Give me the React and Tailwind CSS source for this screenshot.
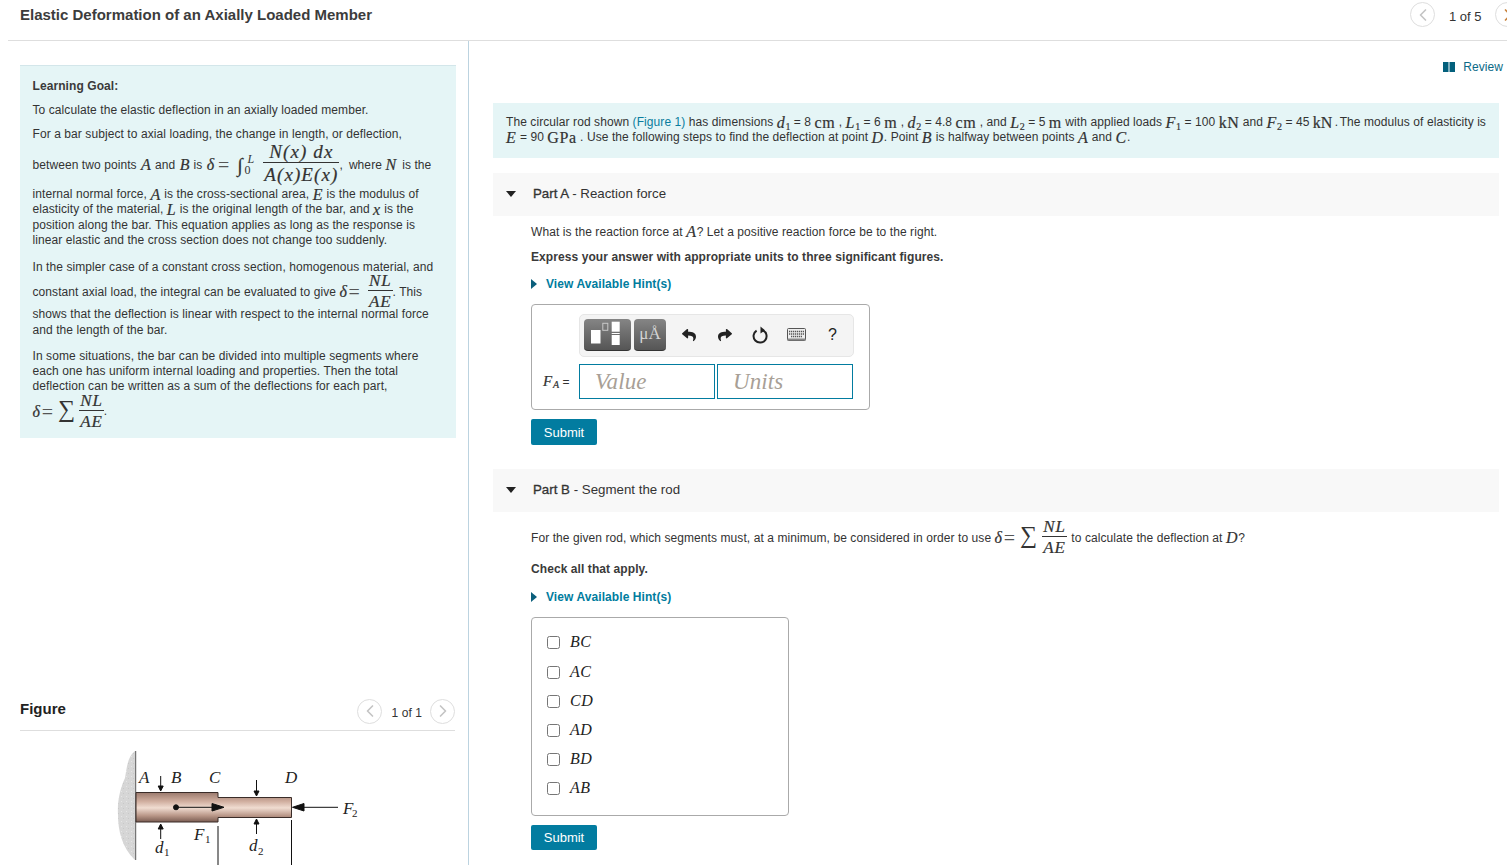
import React from "react";
import { FaReply, FaShare } from "react-icons/fa";
import { LuChevronLeft, LuChevronRight } from "react-icons/lu";

const M = ({ children, size = "text-[16px]", className = "" }) => (
  <span className={`italic ${size} leading-none tracking-[0.7px] [-webkit-text-stroke:0.2px] [font-family:'Liberation_Serif',serif] ${className}`}>{children}</span>
);
const R = ({ children, className = "" }) => (
  <span className={`text-[16px] leading-none [-webkit-text-stroke:0.2px] [font-family:'Liberation_Serif',serif] ${className || "tracking-[0.6px]"}`}>{children}</span>
);
const S = ({ children }) => <span className="text-[10px] not-italic leading-none relative top-[2px] tracking-normal">{children}</span>;

const Eq = ({ className = "" }) => (
  <span className={`text-[20px] leading-none text-[#555] [font-family:'Liberation_Serif',serif] ${className}`}>=</span>
);

const Sigma = ({ className = "" }) => (
  <span className={`text-[24px] leading-none relative -top-[3px] [font-family:'Liberation_Serif',serif] ${className}`}>∑</span>
);

const Frac = ({ top, bottom, size = "text-[17px]", className = "" }) => (
  <span className={`inline-flex flex-col items-center align-middle italic leading-none tracking-[0.9px] [-webkit-text-stroke:0.2px] [font-family:'Liberation_Serif',serif] ${size} ${className}`}>
    <span className="px-[1px] pb-[1px] whitespace-nowrap">{top}</span>
    <span className="self-stretch h-[1px] bg-[#333]" />
    <span className="px-[1px] pt-[2px] whitespace-nowrap">{bottom}</span>
  </span>
);

const Circle = ({ dir, color = "text-[#c4c4c4]", className = "" }) => (
  <span className={`flex-none w-[25px] h-[25px] rounded-full border border-[#dedede] flex items-center justify-center bg-white ${className}`}>
    {dir === "l" ? <LuChevronLeft className={`w-[20px] h-[20px] ${color}`} /> : <LuChevronRight className={`w-[20px] h-[20px] ${color}`} />}
  </span>
);

const Line = ({ h = "h-[15.3px]", children, className = "" }) => (
  <div className={`${h} flex items-center whitespace-pre ${className}`}>{children}</div>
);

const Hint = () => (
  <div className="flex items-center h-[16px] text-[12px] font-bold text-[#007c9e]">
    <span className="w-0 h-0 border-y-[5px] border-y-transparent border-l-[6px] border-l-[#0b5f7c]" />
    <span className="ml-[9px]">View Available Hint(s)</span>
  </div>
);

const PartHead = ({ part, title }) => (
  <div className="h-[43px] bg-[#f8f8f8] flex items-center pb-[2px] text-[13.3px] tracking-normal text-[#333]">
    <span className="ml-[13px] w-0 h-0 border-x-[5.5px] border-x-transparent border-t-[6px] border-t-[#222] mt-[1px]" />
    <span className="ml-[17px]"><span className="[-webkit-text-stroke:0.3px_#333]">{part}</span> - {title}</span>
  </div>
);

const Submit = ({ className = "" }) => (
  <button className={`block w-[66px] bg-[#027ca0] rounded-[2px] text-white text-[13px] tracking-normal leading-none ${className}`}>Submit</button>
);

const Option = ({ label, className = "" }) => (
  <label className={`flex items-center h-[16px] ${className}`}>
    <input type="checkbox" className="w-[13px] h-[13px] m-0" />
    <span className="ml-[10px] italic text-[16px] leading-none tracking-[0.5px] text-[#222] [font-family:'Liberation_Serif',serif]">{label}</span>
  </label>
);

const Diagram = () => (
  <svg width="370" height="134" viewBox="100 731 370 134" className="block">
    <defs>
      <linearGradient id="rod" x1="0" y1="0" x2="0" y2="1">
        <stop offset="0" stopColor="#9b7a6d" />
        <stop offset="0.3" stopColor="#d0ae9f" />
        <stop offset="0.52" stopColor="#f0dcd1" />
        <stop offset="0.78" stopColor="#ba9889" />
        <stop offset="1" stopColor="#7a5c52" />
      </linearGradient>
      <pattern id="speck" width="5" height="5" patternUnits="userSpaceOnUse">
        <rect width="5" height="5" fill="#d6d6d6" />
        <rect x="1" y="1" width="1" height="1" fill="#e6e6e6" />
        <rect x="3" y="3" width="1" height="1" fill="#c8c8c8" />
      </pattern>
    </defs>
    <path d="M135 751 C128 756 127 766 125 778 C121 786 117 800 118 815 C118 830 122 848 135 860 Z" fill="url(#speck)" />
    <line x1="135.7" y1="751" x2="135.7" y2="860" stroke="#555" strokeWidth="1" />
    <path d="M136 792.5 H218 V797.5 H291.5 V817.5 H218 V822 H136 Z" fill="url(#rod)" stroke="#3a2c28" strokeWidth="1" />
    <g stroke="#111" strokeWidth="1" fill="#111">
      <line x1="160.7" y1="776" x2="160.7" y2="789" />
      <path d="M158.2 786 L163.2 786 L160.7 791 Z" />
      <line x1="160.7" y1="826" x2="160.7" y2="839" />
      <path d="M158.2 829 L163.2 829 L160.7 824 Z" />
      <line x1="256.5" y1="780" x2="256.5" y2="794" />
      <path d="M254 791 L259 791 L256.5 796 Z" />
      <line x1="256.5" y1="821" x2="256.5" y2="834" />
      <path d="M254 824 L259 824 L256.5 819 Z" />
      <line x1="176" y1="807.3" x2="220" y2="807.3" />
      <circle cx="176" cy="807.3" r="2.5" />
      <path d="M212 803.5 L224 807.3 L212 811 Z" />
      <line x1="298" y1="807.3" x2="338" y2="807.3" />
      <path d="M304 803.5 L292.5 807.3 L304 811 Z" />
      <line x1="218" y1="826" x2="218" y2="865" />
      <line x1="291.5" y1="820" x2="291.5" y2="865" />
    </g>
    <g fill="#222" fontSize="17" fontStyle="italic" fontFamily="'Liberation Serif', serif">
      <text x="139" y="783">A</text>
      <text x="171" y="783">B</text>
      <text x="209" y="783">C</text>
      <text x="285" y="783">D</text>
      <text x="343" y="814">F</text>
      <text x="194" y="840">F</text>
      <text x="155" y="853">d</text>
      <text x="249" y="851">d</text>
      <g fontStyle="normal" fontSize="11">
        <text x="352" y="817">2</text>
        <text x="205" y="843">1</text>
        <text x="164" y="856">1</text>
        <text x="258" y="855">2</text>
      </g>
    </g>
  </svg>
);

const Matrix = () => (
  <svg width="47" height="32" viewBox="584 319 47 32" className="block">
    <rect x="591" y="330" width="9.5" height="13.5" fill="#fff" />
    <rect x="602.8" y="323.3" width="5" height="7" fill="none" stroke="#c8c8c8" />
    <rect x="611.7" y="321.7" width="8" height="10" fill="#fff" />
    <rect x="611.7" y="333" width="8" height="1" fill="#fff" />
    <rect x="611.7" y="335" width="8" height="10" fill="#fff" />
  </svg>
);

const Reset = () => (
  <svg width="17" height="18" viewBox="0 0 17 18" fill="none" className="block">
    <path d="M11 4.3 A6.5 6.5 0 1 1 4.6 4.6" stroke="#222" strokeWidth="2" />
    <path d="M8.5 0.5 L13 4.3 L8.5 7.5 Z" fill="#222" />
  </svg>
);

const Keyboard = () => (
  <svg width="19" height="13" viewBox="0 0 19 13" className="block">
    <rect x="0.5" y="0.5" width="18" height="12" rx="1" fill="#eee" stroke="#555" />
    <path d="M2 3.5H17M2 6H17M4 8.5H15" stroke="#555" strokeWidth="1.4" strokeDasharray="1.3 0.7" />
    <rect x="0.5" y="10.5" width="18" height="2" fill="#888" />
  </svg>
);

const BookIcon = () => (
  <svg width="12" height="10" viewBox="0 0 12 10" className="block">
    <rect x="0" y="0" width="5.5" height="10" fill="#03607c" />
    <rect x="6.5" y="0" width="5.5" height="10" fill="#03607c" />
  </svg>
);

export default function App() {
  return (
    <div className="h-[865px] w-[1507px] overflow-hidden bg-white text-[12px] tracking-[0.08px] text-[#333] [font-family:'Liberation_Sans',Arial,sans-serif]">
      {/* top bar */}
      <header className="ml-[8px] h-[41px] border-b border-[#dedede] flex pl-[12px] pr-0 relative">
        <h1 className="text-[15px] font-bold tracking-normal leading-none mt-[7px] text-[#3c3c3c]">Elastic Deformation of an Axially Loaded Member</h1>
        <div className="ml-auto flex items-start mt-[2px] mr-[-13px]">
          <Circle dir="l" />
          <span className="ml-[14px] mt-[7px] text-[13px] tracking-normal leading-[15px] w-[46px]">1 of 5</span>
          <Circle dir="r" color="text-[#c9843f]" />
        </div>
      </header>

      <div className="flex h-[824px]">
        {/* left column */}
        <aside className="w-[469px] flex-none border-r border-[#bcd3e0] pl-[20px]">
          <section className="mt-[24px] w-[436px] bg-[#e5f5f6] border-t border-[#d3e6ea] pl-[12.5px] pt-[13px] pb-[8px] leading-[15px]">
            <Line h="h-[15px]" className="font-bold text-[#3a3a3a]">Learning Goal:</Line>
            <Line h="h-[15px]" className="mt-[9px]">To calculate the elastic deflection in an axially loaded member.</Line>
            <Line h="h-[15px]" className="mt-[9px]">For a bar subject to axial loading, the change in length, or deflection,</Line>
            <Line h="h-[45px]" className="pt-[1px]">
              between two points <M className="ml-[1px]">A</M> and <M className="ml-[1px]">B</M> is <M className="ml-[1px]">δ</M><Eq className="ml-[3px] mr-[8px]" /><M size="text-[20px]">∫</M>
              <span className="inline-flex flex-col text-[12px] leading-[11px] [font-family:'Liberation_Serif',serif] ml-[1px] mr-[9px]"><i className="ml-[3px]">L</i><span>0</span></span>
              <Frac top="N(x) dx" bottom="A(x)E(x)" size="text-[19px] tracking-[1.1px]" className="-translate-y-[2px]" />,<span className="ml-[6px]">where </span><M>N</M><span className="ml-[2px]"> is the</span>
            </Line>
            <Line>internal normal force, <M>A</M> is the cross-sectional area, <M>E</M> is the modulus of</Line>
            <Line>elasticity of the material, <M>L</M> is the original length of the bar, and <M>x</M> is the</Line>
            <Line>position along the bar. This equation applies as long as the response is</Line>
            <Line>linear elastic and the cross section does not change too suddenly.</Line>
            <Line h="h-[15px]" className="mt-[12px]">In the simpler case of a constant cross section, homogenous material, and</Line>
            <Line h="h-[32px]" className="pt-[2px]">
              constant axial load, the integral can be evaluated to give <M>δ</M><Eq className="ml-[1px] mr-[8px]" /><Frac top="NL" bottom="AE" className="-translate-y-[1px]" />. This
            </Line>
            <Line>shows that the deflection is linear with respect to the internal normal force</Line>
            <Line>and the length of the bar.</Line>
            <Line h="h-[15px]" className="mt-[11px]">In some situations, the bar can be divided into multiple segments where</Line>
            <Line>each one has uniform internal loading and properties. Then the total</Line>
            <Line>deflection can be written as a sum of the deflections for each part,</Line>
            <Line h="h-[36px]" className="pb-[1px]">
              <M>δ</M><Eq className="ml-[1px] mr-[5px]" /><Sigma /><Frac top="NL" bottom="AE" className="ml-[4px] -translate-y-[1px]" />.
            </Line>
          </section>

          <section className="mt-[255.6px] w-[435px] h-[37px] border-b border-[#dedede] flex items-start">
            <h2 className="text-[15px] font-bold tracking-normal leading-none mt-[7px] text-[#222]">Figure</h2>
            <div className="ml-auto flex items-start mt-[5px]">
              <Circle dir="l" />
              <span className="ml-[9px] mt-[7px] leading-[15px]">1 of 1</span>
              <Circle dir="r" className="ml-[8px]" />
            </div>
          </section>
          <div className="ml-[80px]"><Diagram /></div>
        </aside>

        {/* right column */}
        <main className="flex-1 pl-[24px] pr-[8px]">
          <div className="h-[62px] flex justify-end items-start mr-[-4px] text-[#0b6a87]">
            <div className="flex items-center h-[16px] mt-[18px]">
              <BookIcon />
              <span className="ml-[8px]">Review</span>
            </div>
          </div>

          <section className="h-[55px] bg-[#e5f5f6] pl-[13px] pt-[12px] leading-[15px]">
            <Line h="h-[15px]">
              The circular rod shown <span className="text-[#0a7d9e]">(Figure 1)</span> has dimensions <M>d<S>1</S></M> = 8 <R>cm</R> , <M>L<S>1</S></M> = 6 <R>m</R> , <M>d<S>2</S></M> = 4.8 <R>cm</R> , and <M>L<S>2</S></M> = 5 <R>m</R> with applied loads <M>F<S>1</S></M> = 100 <R>kN</R> and <M>F<S>2</S></M> = 45 <R className="tracking-normal mr-[-1px]">kN</R> . <span className="ml-[-2px]">The modulus of elasticity is</span>
            </Line>
            <Line h="h-[15px]">
              <M>E</M> = 90 <R>GPa</R> . Use the following steps to find the deflection at point <M>D</M>. Point <M>B</M> is halfway between points <M>A</M> and <M>C</M>.
            </Line>
          </section>

          <div className="mt-[15px]"><PartHead part="Part A" title="Reaction force" /></div>
          <div className="pl-[38px]">
            <Line h="h-[16px]" className="mt-[8px]">What is the reaction force at <M>A</M>? Let a positive reaction force be to the right.</Line>
            <Line h="h-[16px]" className="mt-[9px] font-bold text-[#3a3a3a]">Express your answer with appropriate units to three significant figures.</Line>
            <div className="mt-[11px]"><Hint /></div>

            <div className="mt-[12px] w-[339px] h-[106px] border border-[#aaa] rounded-[4px] pt-[9px] pl-[47px]">
              <div className="w-[275px] h-[43px] bg-[#f4f4f4] border border-[#e6e6e6] rounded-[5px] flex items-center pl-[4px] pb-[2px]">
                <span className="w-[47px] h-[32px] rounded-[4px] bg-gradient-to-b from-[#858585] to-[#555] border-b border-[#333]"><Matrix /></span>
                <span className="ml-[3px] w-[32px] h-[32px] rounded-[4px] bg-gradient-to-b from-[#858585] to-[#555] border-b border-[#333] flex items-center justify-center text-[17px] text-[#d4d4d4] [font-family:'Liberation_Serif',serif]">μÅ</span>
                <FaReply className="ml-[16px] w-[14px] h-[14px] text-[#222]" />
                <FaShare className="ml-[22px] w-[14px] h-[14px] text-[#222]" />
                <span className="ml-[20px]"><Reset /></span>
                <span className="ml-[18px]"><Keyboard /></span>
                <span className="ml-[22px] text-[16px] text-[#222]">?</span>
              </div>
              <div className="flex items-center mt-[7px] ml-[-36px] h-[35px]">
                <span className="w-[36px] whitespace-nowrap"><M size="text-[15px]">F<S><i>A</i></S></M> =</span>
                <input placeholder="Value" className="w-[136px] h-[35px] border border-[#027ca0] pl-[15px] italic text-[23px] outline-none placeholder:text-[#a89f96] [font-family:'Liberation_Serif',serif]" />
                <input placeholder="Units" className="ml-[2px] w-[136px] h-[35px] border border-[#027ca0] pl-[15px] italic text-[23px] outline-none placeholder:text-[#a89f96] [font-family:'Liberation_Serif',serif]" />
              </div>
            </div>
            <Submit className="mt-[9px] h-[26px]" />
          </div>

          <div className="mt-[24px]"><PartHead part="Part B" title="Segment the rod" /></div>
          <div className="pl-[38px]">
            <Line h="h-[38px]" className="mt-[7px]">
              For the given rod, which segments must, at a minimum, be considered in order to use <M>δ</M><Eq className="ml-[1px] mr-[5px]" /><Sigma /><Frac top="NL" bottom="AE" className="ml-[5px] mr-[1px] -translate-y-[1px]" /> to calculate the deflection at <M>D</M>?
            </Line>
            <Line h="h-[16px]" className="mt-[4px] font-bold text-[#3a3a3a]">Check all that apply.</Line>
            <div className="mt-[12px]"><Hint /></div>

            <div className="mt-[12px] w-[258px] h-[199px] border border-[#aaa] rounded-[4px] pt-[16px] pl-[15px]">
              <Option label="BC" />
              <Option label="AC" className="mt-[14px]" />
              <Option label="CD" className="mt-[13px]" />
              <Option label="AD" className="mt-[13px]" />
              <Option label="BD" className="mt-[13px]" />
              <Option label="AB" className="mt-[13px]" />
            </div>
            <Submit className="mt-[9px] h-[25px]" />
          </div>
        </main>
      </div>
    </div>
  );
}
